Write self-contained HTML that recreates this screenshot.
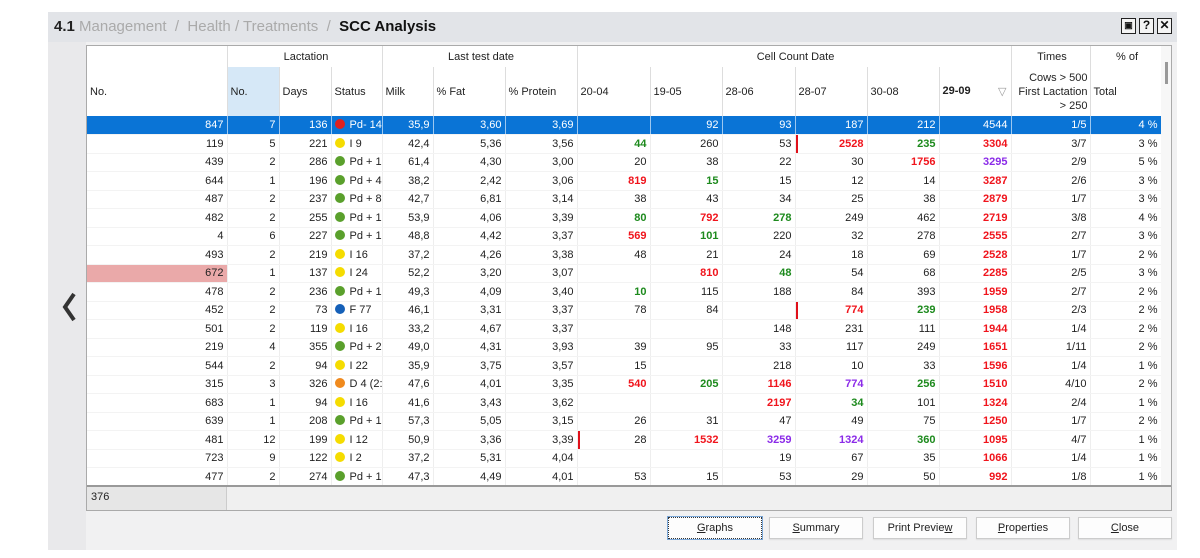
<!DOCTYPE html>
<html><head><meta charset="utf-8"><style>
*{margin:0;padding:0;box-sizing:border-box}
body{width:1200px;height:558px;background:#fff;font-family:"Liberation Sans",sans-serif;font-size:11px;color:#222;position:relative;overflow:hidden}
#panel{position:absolute;left:48px;top:12px;width:1129px;height:538px;background:#f1f1f2}
#title{position:absolute;left:48px;top:12px;width:1129px;height:30px;background:#e2e4e8;font-size:15px;line-height:30px;padding-left:6px;color:#aaa}
#title b{color:#222;font-weight:bold}
#title .t{color:#111;font-weight:bold}
.ic{position:absolute;top:18px;width:15px;height:16px;border:1.5px solid #222;background:#f4f4f4;font-size:12px;font-weight:bold;text-align:center;line-height:13px;color:#111}
#left{position:absolute;left:48px;top:42px;width:38px;height:508px;background:#e9e9eb}
#grid{position:absolute;left:86px;top:45px;width:1086px;height:466px;background:#fff;border:1px solid #aaa}
table{position:absolute;left:0;top:0;border-collapse:collapse;table-layout:fixed;width:1074px}
td{white-space:nowrap;overflow:hidden;text-align:right;padding-right:3px;border-right:1px solid #eee;border-bottom:1px solid #f3f3f3;height:18.5px;line-height:16px;position:relative}
th{font-weight:normal;text-align:left;padding-left:3px;border-right:1px solid #ddd;white-space:nowrap;overflow:hidden;color:#222}
tr.h1 th{height:21px;text-align:center;border-bottom:none}
tr.h2 th{height:49px}
tr.sel td{background:#0a74d6;color:#fff;border-right:1px solid #9cc7f0}
td.s{text-align:left;padding-left:3px}
.d{display:inline-block;width:10px;height:10px;border-radius:50%;vertical-align:-1px;margin-right:5px}
.dr{background:#e0201e}.dy{background:#f5dc00}.dg{background:#5aa02c}.db{background:#1560b8}.do{background:#f08a1e}
.g{color:#1d8a1d;font-weight:bold}.r{color:#f0141c;font-weight:bold}.p{color:#8b2be8;font-weight:bold}
.bar{position:absolute;left:0;top:0;width:2px;height:18px;background:#e0101a}
#foot{position:absolute;left:0;top:439px;width:1084px;height:25px;background:#f0f0f0;border-top:2px solid #999}
#foot div{position:absolute;left:0;top:0;width:140px;height:23px;background:#e6e6e6;border-right:1px solid #ccc;padding:4px 4px;}
#sb{position:absolute;left:1074px;top:0;width:10px;height:439px;background:#f7f7f7}
#sb div{position:absolute;left:4px;top:16px;width:3px;height:22px;background:#999}
.btn{position:absolute;top:517px;width:94px;height:22px;background:#fdfdfd;border:1px solid #ccc;text-align:center;line-height:20px;font-size:11px;box-shadow:0 1px 1px #ddd}
.btn u{text-decoration:underline}
</style></head><body>
<div id="panel"></div>
<div id="title"><b>4.1</b> Management &nbsp;/&nbsp; Health / Treatments &nbsp;/&nbsp; <span class="t">SCC Analysis</span></div>
<div class="ic" style="left:1121px;font-size:9px">▣</div>
<div class="ic" style="left:1139px">?</div>
<div class="ic" style="left:1157px">✕</div>
<div id="left"><svg style="position:absolute;left:14px;top:250px" width="14" height="30"><path d="M12 2 L3 15 L12 28" stroke="#333" stroke-width="4" fill="none"/></svg></div>
<div id="grid">
<table>
<colgroup><col style="width:140px"><col style="width:52px"><col style="width:52px"><col style="width:51px"><col style="width:51px"><col style="width:72px"><col style="width:72px"><col style="width:73px"><col style="width:72px"><col style="width:73px"><col style="width:72px"><col style="width:72px"><col style="width:72px"><col style="width:79px"><col style="width:71px"></colgroup>
<tr class="h1"><th></th><th colspan="3">Lactation</th><th colspan="3">Last test date</th><th colspan="6">Cell Count Date</th><th>Times</th><th>% of</th></tr>
<tr class="h2"><th>No.</th><th style="background:#d6e8f7">No.</th><th>Days</th><th>Status</th><th>Milk</th><th>% Fat</th><th>% Protein</th><th>20-04</th><th>19-05</th><th>28-06</th><th>28-07</th><th>30-08</th><th><b>29-09</b><span style="float:right;color:#999;margin-right:4px">▽</span></th><th style="text-align:right;padding-right:2px;line-height:14px">Cows &gt; 500<br>First Lactation<br>&gt; 250</th><th>Total</th></tr>
<tr class="sel"><td>847</td><td>7</td><td>136</td><td class="s"><span class="d dr"></span>Pd- 14</td><td>35,9</td><td>3,60</td><td>3,69</td><td></td><td>92</td><td>93</td><td>187</td><td>212</td><td>4544</td><td>1/5</td><td>4 %</td></tr>
<tr><td>119</td><td>5</td><td>221</td><td class="s"><span class="d dy"></span>I 9</td><td>42,4</td><td>5,36</td><td>3,56</td><td class="g">44</td><td>260</td><td>53</td><td class="r"><span class="bar"></span>2528</td><td class="g">235</td><td class="r">3304</td><td>3/7</td><td>3 %</td></tr>
<tr><td>439</td><td>2</td><td>286</td><td class="s"><span class="d dg"></span>Pd + 1!</td><td>61,4</td><td>4,30</td><td>3,00</td><td>20</td><td>38</td><td>22</td><td>30</td><td class="r">1756</td><td class="p">3295</td><td>2/9</td><td>5 %</td></tr>
<tr><td>644</td><td>1</td><td>196</td><td class="s"><span class="d dg"></span>Pd + 4:</td><td>38,2</td><td>2,42</td><td>3,06</td><td class="r">819</td><td class="g">15</td><td>15</td><td>12</td><td>14</td><td class="r">3287</td><td>2/6</td><td>3 %</td></tr>
<tr><td>487</td><td>2</td><td>237</td><td class="s"><span class="d dg"></span>Pd + 8:</td><td>42,7</td><td>6,81</td><td>3,14</td><td>38</td><td>43</td><td>34</td><td>25</td><td>38</td><td class="r">2879</td><td>1/7</td><td>3 %</td></tr>
<tr><td>482</td><td>2</td><td>255</td><td class="s"><span class="d dg"></span>Pd + 1</td><td>53,9</td><td>4,06</td><td>3,39</td><td class="g">80</td><td class="r">792</td><td class="g">278</td><td>249</td><td>462</td><td class="r">2719</td><td>3/8</td><td>4 %</td></tr>
<tr><td>4</td><td>6</td><td>227</td><td class="s"><span class="d dg"></span>Pd + 1!</td><td>48,8</td><td>4,42</td><td>3,37</td><td class="r">569</td><td class="g">101</td><td>220</td><td>32</td><td>278</td><td class="r">2555</td><td>2/7</td><td>3 %</td></tr>
<tr><td>493</td><td>2</td><td>219</td><td class="s"><span class="d dy"></span>I 16</td><td>37,2</td><td>4,26</td><td>3,38</td><td>48</td><td>21</td><td>24</td><td>18</td><td>69</td><td class="r">2528</td><td>1/7</td><td>2 %</td></tr>
<tr><td style="background:#eaa9a9">672</td><td>1</td><td>137</td><td class="s"><span class="d dy"></span>I 24</td><td>52,2</td><td>3,20</td><td>3,07</td><td></td><td class="r">810</td><td class="g">48</td><td>54</td><td>68</td><td class="r">2285</td><td>2/5</td><td>3 %</td></tr>
<tr><td>478</td><td>2</td><td>236</td><td class="s"><span class="d dg"></span>Pd + 1'</td><td>49,3</td><td>4,09</td><td>3,40</td><td class="g">10</td><td>115</td><td>188</td><td>84</td><td>393</td><td class="r">1959</td><td>2/7</td><td>2 %</td></tr>
<tr><td>452</td><td>2</td><td>73</td><td class="s"><span class="d db"></span>F 77</td><td>46,1</td><td>3,31</td><td>3,37</td><td>78</td><td>84</td><td></td><td class="r"><span class="bar"></span>774</td><td class="g">239</td><td class="r">1958</td><td>2/3</td><td>2 %</td></tr>
<tr><td>501</td><td>2</td><td>119</td><td class="s"><span class="d dy"></span>I 16</td><td>33,2</td><td>4,67</td><td>3,37</td><td></td><td></td><td>148</td><td>231</td><td>111</td><td class="r">1944</td><td>1/4</td><td>2 %</td></tr>
<tr><td>219</td><td>4</td><td>355</td><td class="s"><span class="d dg"></span>Pd + 2'</td><td>49,0</td><td>4,31</td><td>3,93</td><td>39</td><td>95</td><td>33</td><td>117</td><td>249</td><td class="r">1651</td><td>1/11</td><td>2 %</td></tr>
<tr><td>544</td><td>2</td><td>94</td><td class="s"><span class="d dy"></span>I 22</td><td>35,9</td><td>3,75</td><td>3,57</td><td>15</td><td></td><td>218</td><td>10</td><td>33</td><td class="r">1596</td><td>1/4</td><td>1 %</td></tr>
<tr><td>315</td><td>3</td><td>326</td><td class="s"><span class="d do"></span>D 4 (2:</td><td>47,6</td><td>4,01</td><td>3,35</td><td class="r">540</td><td class="g">205</td><td class="r">1146</td><td class="p">774</td><td class="g">256</td><td class="r">1510</td><td>4/10</td><td>2 %</td></tr>
<tr><td>683</td><td>1</td><td>94</td><td class="s"><span class="d dy"></span>I 16</td><td>41,6</td><td>3,43</td><td>3,62</td><td></td><td></td><td class="r">2197</td><td class="g">34</td><td>101</td><td class="r">1324</td><td>2/4</td><td>1 %</td></tr>
<tr><td>639</td><td>1</td><td>208</td><td class="s"><span class="d dg"></span>Pd + 1:</td><td>57,3</td><td>5,05</td><td>3,15</td><td>26</td><td>31</td><td>47</td><td>49</td><td>75</td><td class="r">1250</td><td>1/7</td><td>2 %</td></tr>
<tr><td>481</td><td>12</td><td>199</td><td class="s"><span class="d dy"></span>I 12</td><td>50,9</td><td>3,36</td><td>3,39</td><td><span class="bar"></span>28</td><td class="r">1532</td><td class="p">3259</td><td class="p">1324</td><td class="g">360</td><td class="r">1095</td><td>4/7</td><td>1 %</td></tr>
<tr><td>723</td><td>9</td><td>122</td><td class="s"><span class="d dy"></span>I 2</td><td>37,2</td><td>5,31</td><td>4,04</td><td></td><td></td><td>19</td><td>67</td><td>35</td><td class="r">1066</td><td>1/4</td><td>1 %</td></tr>
<tr><td>477</td><td>2</td><td>274</td><td class="s"><span class="d dg"></span>Pd + 1!</td><td>47,3</td><td>4,49</td><td>4,01</td><td>53</td><td>15</td><td>53</td><td>29</td><td>50</td><td class="r">992</td><td>1/8</td><td>1 %</td></tr>
</table>
<div id="sb"><div></div></div>
<div id="foot"><div>376</div></div>
</div>
<div class="btn" style="left:668px;border:1px dotted #333;box-shadow:0 0 0 1px #7aa7d8"><u>G</u>raphs</div>
<div class="btn" style="left:769px"><u>S</u>ummary</div>
<div class="btn" style="left:873px">Print Previe<u>w</u></div>
<div class="btn" style="left:976px"><u>P</u>roperties</div>
<div class="btn" style="left:1078px"><u>C</u>lose</div>
</body></html>
